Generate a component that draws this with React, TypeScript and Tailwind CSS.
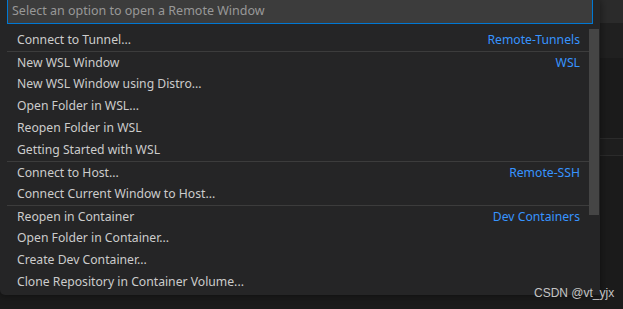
import React from "react";

type Item = { label: string; group?: string; sep?: boolean };

const items: Item[] = [
  { label: "Connect to Tunnel...", group: "Remote-Tunnels" },
  { label: "New WSL Window", group: "WSL", sep: true },
  { label: "New WSL Window using Distro..." },
  { label: "Open Folder in WSL..." },
  { label: "Reopen Folder in WSL" },
  { label: "Getting Started with WSL" },
  { label: "Connect to Host...", group: "Remote-SSH", sep: true },
  { label: "Connect Current Window to Host..." },
  { label: "Reopen in Container", group: "Dev Containers", sep: true },
  { label: "Open Folder in Container..." },
  { label: "Create Dev Container..." },
  { label: "Clone Repository in Container Volume..." },
];

export default function App() {
  return (
    <div
      className="relative w-[623px] h-[309px] overflow-hidden bg-[#1b1b1b] flex"
      style={{ fontFamily: '"Segoe UI", "Noto Sans", sans-serif' }}
    >
      <div className="w-[600px] h-[295px] bg-[#252526] rounded-bl-[5px] shadow-[0_0_8px_rgba(0,0,0,0.5)] relative z-10 flex flex-col">
        <div className="mx-[7px] h-[24px] bg-[#3c3c3c] border border-t-0 border-[#0078d4] flex items-center pl-[4px] text-[12.5px] text-[#989898]">
          Select an option to open a Remote Window
        </div>
        <div className="mt-[5px] mx-[7px] flex flex-col">
          {items.map((it, i) => (
            <div
              key={i}
              className={
                "h-[22px] flex items-center justify-between pl-[10px] pr-[13px] pt-[1px] text-[12.2px] " +
                (it.sep ? "border-t border-[#3c3c3c]" : "")
              }
            >
              <span className="text-[#cccccc]">{it.label}</span>
              {it.group && <span className="text-[#3794ff]">{it.group}</span>}
            </div>
          ))}
        </div>
        <div className="absolute left-[589px] top-[29px] w-[10px] h-[186px] bg-[#454545]" />
      </div>
      <div className="flex-1 flex flex-col">
        <div className="h-[23px] bg-[#2b2b2b]" />
        <div className="h-[35px] bg-[#202020]" />
        <div className="h-[80px] bg-[#1b1b1b]" />
        <div className="h-[1px] bg-[#2b2b2b]" />
        <div className="h-[16px] bg-[#1e1e1e]" />
        <div className="h-[1px] bg-[#2b2b2b]" />
        <div className="flex-1 bg-[#1b1b1b]" />
      </div>
      <div
        className="absolute left-[534px] top-[285px] z-20 text-[12px] leading-[16px] text-[#c4c4c4]"
        style={{ fontFamily: '"Liberation Sans", Arial, sans-serif' }}
      >
        CSDN @vt_yjx
      </div>
    </div>
  );
}
